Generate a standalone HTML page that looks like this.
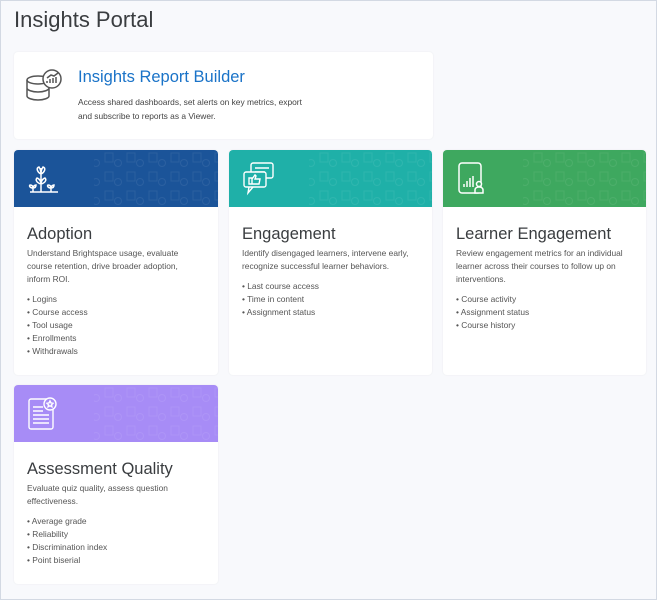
<!DOCTYPE html>
<html><head><meta charset="utf-8"><style>
*{margin:0;padding:0;box-sizing:border-box}
body{width:657px;height:600px;background:#f8f9fc;font-family:"Liberation Sans",sans-serif;color:#494c4e;position:relative;overflow:hidden;border:1px solid #d3d9e3}
.t{position:absolute;left:13px;top:6px;font-size:22px;color:#3a3d40}
.card{position:absolute;background:#fff;border-radius:4px;box-shadow:0 0 2px rgba(0,0,0,.06)}
.hd{height:57px;border-radius:4px 4px 0 0;position:relative;overflow:hidden}
.hd svg.pat{position:absolute;left:0;top:0}
.hd svg.ic{position:absolute;left:13px;top:10px}
.ct{position:absolute;left:13px;top:75px;font-size:16.5px;color:#3a3d40}
.d{position:absolute;left:13px;top:97px;width:172px;font-size:8.4px;line-height:13px;color:#555}
ul{list-style:none;margin-top:7px}
ul li:before{content:"• "}
</style></head><body>
<div class="t">Insights Portal</div>
<div class="card" style="left:13px;top:51px;width:419px;height:87px">
<svg style="position:absolute;left:11px;top:16px" width="40" height="40" viewBox="0 0 40 40" fill="none" stroke="#555" stroke-width="1.5"><ellipse cx="13" cy="12" rx="11" ry="4"/><path d="M2 12v8c0 2 5 4 11 4s11-2 11-4M2 20v8c0 2 5 4 11 4s11-2 11-4v-8"/><circle cx="27" cy="11" r="9" fill="#fff"/><path d="M22 15v-2M25 15v-4M28 15v-5M31 15v-6M22 10l4-3 3 1 4-3"/></svg>
<div style="position:absolute;left:64px;top:16px;font-size:16.5px;color:#1a73c8">Insights Report Builder</div>
<div style="position:absolute;left:64px;top:43px;font-size:8.4px;line-height:14px;color:#444">Access shared dashboards, set alerts on key metrics, export<br>and subscribe to reports as a Viewer.</div>
</div>

<svg width="0" height="0" style="position:absolute"><defs><pattern id="p" width="22" height="19" patternUnits="userSpaceOnUse"><rect x="3" y="3" width="8" height="9" fill="none" stroke="rgba(255,255,255,.07)"/><circle cx="16" cy="13" r="3.5" fill="none" stroke="rgba(255,255,255,.07)"/></pattern></defs></svg>

<div class="card" style="left:13px;top:149px;width:204px;height:225px">
<div class="hd" style="background:#1b5499"><svg class="pat" width="204" height="57"><rect x="80" width="124" height="57" fill="url(#p)"/></svg>
<svg class="ic" width="36" height="36" viewBox="0 0 36 36" fill="none" stroke="#fff" stroke-width="1.5"><path d="M3 32h28M14 32V8M14 14c-4-2-5-6-2-7 2 3 2 5 2 7zm0 0c4-2 5-6 2-7-2 3-2 5-2 7zM14 24c-4-1-6-4-4-6 3 1 4 4 4 6zm0 0c4-1 6-4 4-6-3 1-4 4-4 6zM6 32v-4c-3 0-4-2-3-3 2 0 3 1 3 3 0-2 2-3 3-3 0 2-1 3-3 3M24 32v-4c-3 0-4-2-3-3 2 0 3 1 3 3 0-2 2-3 3-3 0 2-1 3-3 3"/></svg></div>
<div class="ct">Adoption</div>
<div class="d">Understand Brightspace usage, evaluate course retention, drive broader adoption, inform ROI.<ul><li>Logins</li><li>Course access</li><li>Tool usage</li><li>Enrollments</li><li>Withdrawals</li></ul></div>
</div>

<div class="card" style="left:228px;top:149px;width:203px;height:225px">
<div class="hd" style="background:#1fb0a8"><svg class="pat" width="203" height="57"><rect x="80" width="123" height="57" fill="url(#p)"/></svg>
<svg class="ic" width="36" height="36" viewBox="0 0 36 36" fill="none" stroke="#fff" stroke-width="1.4"><rect x="9" y="3" width="22" height="15" rx="2"/><path d="M13 8h14M13 12h10"/><rect x="2" y="12" width="22" height="15" rx="2" fill="#1fb0a8"/><path d="M7 27l-1 6 5-6M7 24v-6h3v6zM10 19l3-4 1 1-1 3h5l-1 5h-7"/></svg></div>
<div class="ct">Engagement</div>
<div class="d">Identify disengaged learners, intervene early, recognize successful learner behaviors.<ul><li>Last course access</li><li>Time in content</li><li>Assignment status</li></ul></div>
</div>

<div class="card" style="left:442px;top:149px;width:203px;height:225px">
<div class="hd" style="background:#3ea85f"><svg class="pat" width="203" height="57"><rect x="80" width="123" height="57" fill="url(#p)"/></svg>
<svg class="ic" width="36" height="36" viewBox="0 0 36 36" fill="none" stroke="#fff" stroke-width="1.5"><rect x="3" y="3" width="22" height="30" rx="3"/><path d="M8 27v-3M11 27v-6M14 27v-9M17 27v-11"/><circle cx="23" cy="24" r="2.5" fill="#3ea85f"/><path d="M19 33v-3c0-2 2-3 4-3s4 1 4 3v3z" fill="#3ea85f"/></svg></div>
<div class="ct">Learner Engagement</div>
<div class="d">Review engagement metrics for an individual learner across their courses to follow up on interventions.<ul><li>Course activity</li><li>Assignment status</li><li>Course history</li></ul></div>
</div>

<div class="card" style="left:13px;top:384px;width:204px;height:199px">
<div class="hd" style="background:#a78cf6"><svg class="pat" width="204" height="57"><rect x="80" width="124" height="57" fill="url(#p)"/></svg>
<svg class="ic" width="36" height="36" viewBox="0 0 36 36" fill="none" stroke="#fff" stroke-width="1.4"><rect x="2" y="4" width="24" height="30" rx="2"/><path d="M6 12h10M6 16h10M6 20h16M6 24h16M6 28h16"/><circle cx="23" cy="9" r="6" fill="#a78cf6"/><path d="M23 6l1 2 2 .3-1.5 1.5.4 2-1.9-1-1.9 1 .4-2L20 8.3l2-.3z"/></svg></div>
<div class="ct">Assessment Quality</div>
<div class="d">Evaluate quiz quality, assess question effectiveness.<ul><li>Average grade</li><li>Reliability</li><li>Discrimination index</li><li>Point biserial</li></ul></div>
</div>
</body></html>
